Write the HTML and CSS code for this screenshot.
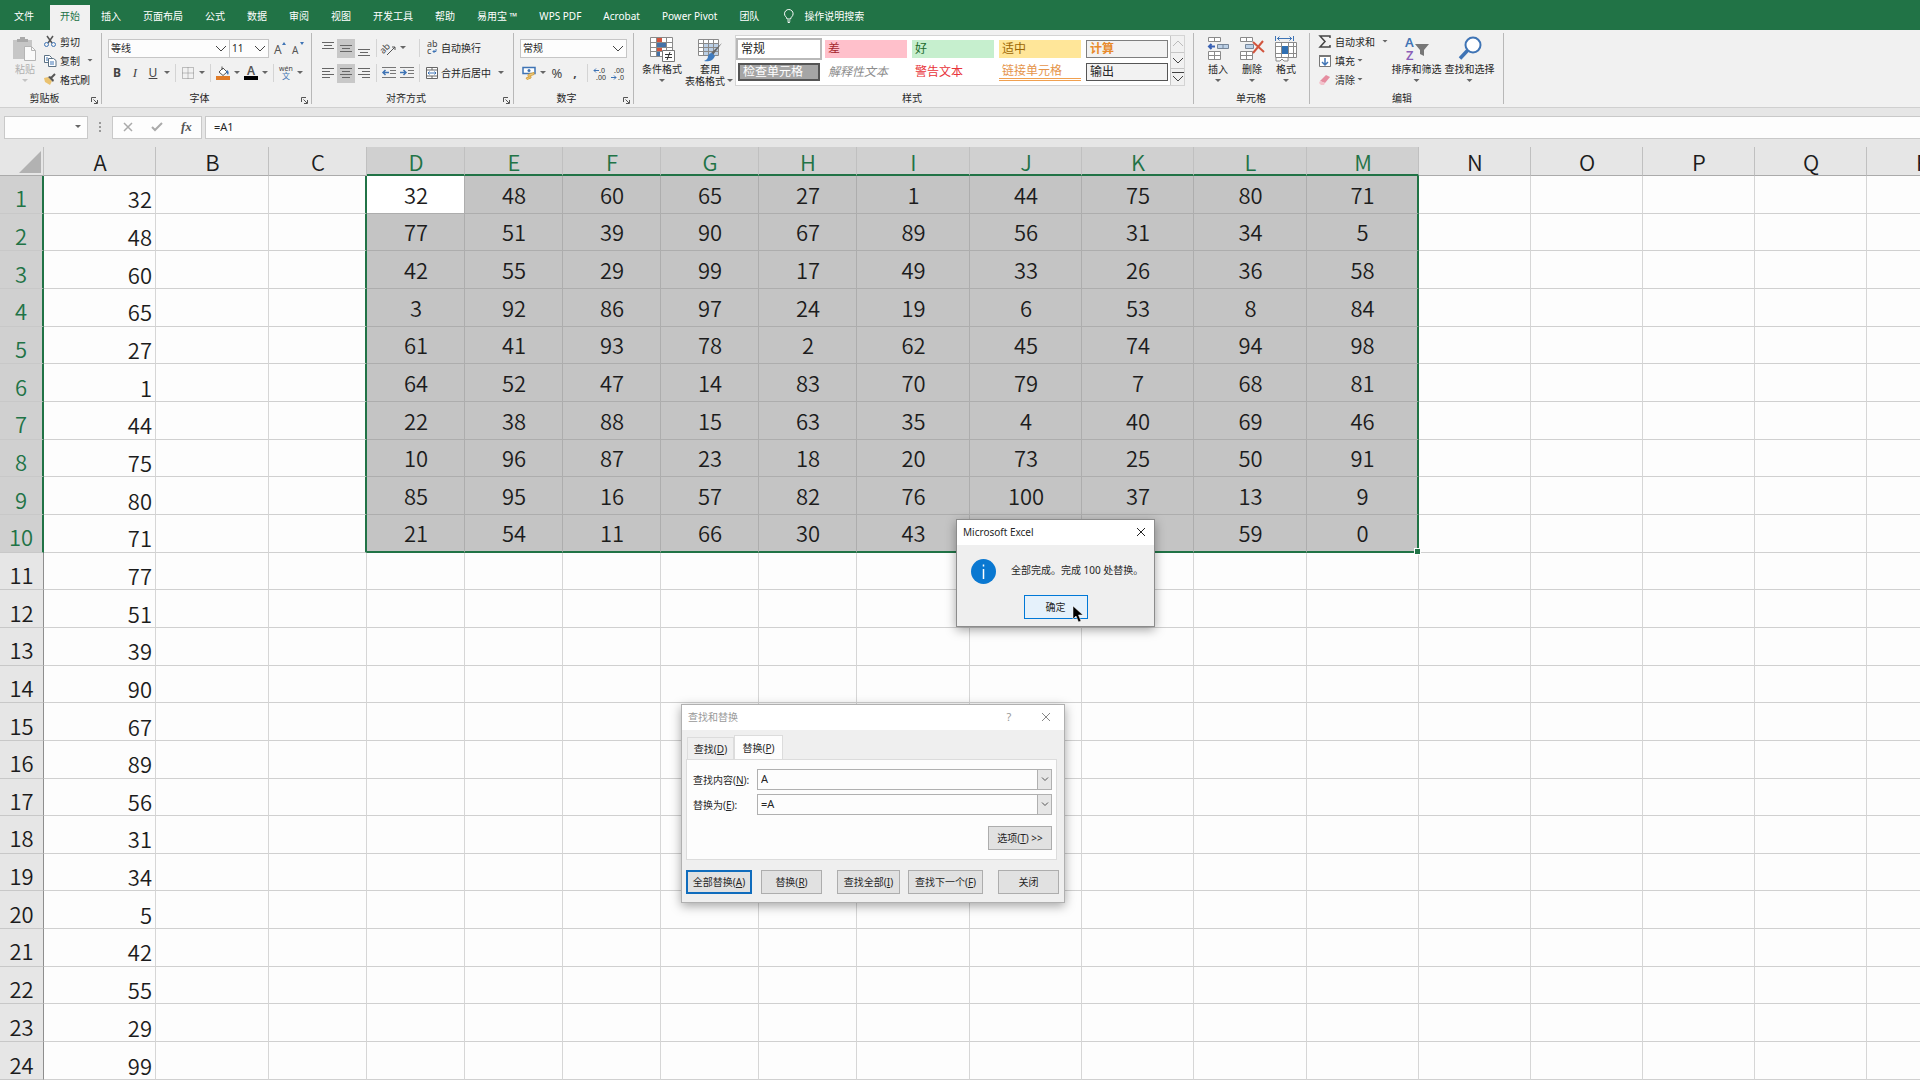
FILE: index.html
```html
<!DOCTYPE html>
<html lang="zh-CN">
<head>
<meta charset="UTF-8" />
<meta name="viewport" content="width=device-width, initial-scale=1" />
<title>Microsoft Excel</title>
<link rel="stylesheet" href="styles.css">
</head>
<body>

<nav class="tabs">
  <a class="tab tab-file" href="#file">文件</a>
  <a class="tab active" href="#home">开始</a>
  <a class="tab" href="#insert">插入</a>
  <a class="tab" href="#layout">页面布局</a>
  <a class="tab" href="#formulas">公式</a>
  <a class="tab" href="#data">数据</a>
  <a class="tab" href="#review">审阅</a>
  <a class="tab" href="#view">视图</a>
  <a class="tab" href="#developer">开发工具</a>
  <a class="tab" href="#help">帮助</a>
  <a class="tab" href="#yyb">易用宝 ™</a>
  <a class="tab" href="#wps">WPS PDF</a>
  <a class="tab" href="#acrobat">Acrobat</a>
  <a class="tab" href="#pivot">Power Pivot</a>
  <a class="tab" href="#team">团队</a>
  <a class="tab tell-me" href="#search">
    <svg width="12" height="14" viewBox="0 0 12 14" fill="none" stroke="#fff"><path d="M4 10C4 8 1.500 7.500 1.500 4.800a4.300 4.300 0 0 1 8.600 0C10.100 7.500 7.600 8 7.600 10zM4.200 12h3.200M4.800 13.500h2"/></svg>
    操作说明搜索
  </a>
</nav>

<section class="ribbon" aria-label="开始">
  <div class="group group-clipboard">
    <div class="group-body">
      <button class="big disabled">
        <svg width="26" height="26" viewBox="0 0 26 26"><path fill="#c6c6c6" d="M1 4h19v19H1z"/><path fill="#a9a9a9" d="M5 3h3V1h5v2h3v3H5z"/><path fill="#fafafa" stroke="#b5b5b5" d="M12.500 10.500h7l4 4v10h-11z"/><path fill="none" stroke="#b5b5b5" d="M19.500 10.500v4h4"/></svg>
        <span>粘贴</span>
        <i class="arrow"></i>
      </button>
      <div class="stack">
        <button class="small">
          <svg width="14" height="13" viewBox="0 0 14 13" fill="none"><path stroke="#555" stroke-width="1.500" d="M4 1l5 7M10 1L5 8"/><circle cx="3.500" cy="9.500" r="2" stroke="#3f74b5"/><circle cx="10.500" cy="9.500" r="2" stroke="#3f74b5"/></svg>
          <span>剪切</span>
        </button>
        <button class="small">
          <svg width="14" height="13" viewBox="0 0 14 13"><path fill="#fff" stroke="#5b7184" d="M1.500 1.500h5l2 2v5h-7z"/><path fill="#fff" stroke="#5b7184" d="M5.500 4.500h5l2.500 2v6h-7.500z"/><path stroke="#3f74b5" d="M3 4h2M3 6h2M7 8h4M7 10h4"/></svg>
          <span>复制</span><i class="arrow copy-arrow"></i>
        </button>
        <button class="small">
          <svg width="14" height="13" viewBox="0 0 14 13"><path fill="#eac270" d="M1 5l4-1 4 4-2 4-5-3z"/><path fill="#555" d="M5 4l2-1 4 4-1 2z"/><path stroke="#555" stroke-width="2" d="M8 5l4-4"/></svg>
          <span>格式刷</span>
        </button>
      </div>
    </div>
    <div class="group-label">剪贴板</div>
    <button class="launcher" aria-label="剪贴板设置"><svg width="7" height="7" viewBox="0 0 7 7" fill="none" stroke="#555"><path d="M.5 5V.5H5M2.500 2.500L6 6M6.500 3v3.500H3"/></svg></button>
  </div>

  <div class="group group-font">
    <div class="group-body rows">
      <div class="row">
        <select class="box font-name" aria-label="字体"><option>等线</option></select>
        <select class="box font-size" aria-label="字号"><option>11</option></select>
        <button class="tool grow" aria-label="增大字号"><svg width="14" height="14" viewBox="0 0 14 14"><text x="1" y="13" font-size="12" fill="#555">A</text><path fill="#3f74b5" d="M9 4l2-3 2 3z"/></svg></button>
        <button class="tool" aria-label="减小字号"><svg width="14" height="14" viewBox="0 0 14 14"><text x="1" y="13" font-size="10" fill="#555">A</text><path fill="#3f74b5" d="M9 1h4l-2 3z"/></svg></button>
      </div>
      <div class="row">
        <button class="tool bold">B</button>
        <button class="tool italic">I</button>
        <button class="tool under">U</button>
        <i class="arrow"></i>
        <span class="sep"></span>
        <button class="tool" aria-label="边框"><svg width="12" height="12" viewBox="0 0 12 12" fill="none" stroke="#888" stroke-dasharray="1 1"><path d="M.5.5h11v11H.5zM6 .5v11M.5 6h11"/></svg></button>
        <i class="arrow"></i>
        <span class="sep"></span>
        <button class="tool" aria-label="填充颜色"><svg width="14" height="14" viewBox="0 0 14 14"><path fill="#fff" stroke="#555" d="M3 6l4-4 4 4-4 3.500zM6 4V.5"/><path fill="#3f74b5" d="M11 4c2 1 2 3 1 5l-2-3z"/><path fill="#e07b28" d="M0 10h14v4H0z"/></svg></button>
        <i class="arrow"></i>
        <button class="tool" aria-label="字体颜色"><svg width="14" height="14" viewBox="0 0 14 14"><text x="3" y="9" font-size="12" font-weight="600" fill="#555">A</text><path d="M0 10h14v4H0z"/></svg></button>
        <i class="arrow"></i>
        <span class="sep"></span>
        <button class="tool" aria-label="拼音"><svg width="14" height="14" viewBox="0 0 14 14"><text x="0" y="5" font-size="7" fill="#444">wén</text><text x="3" y="13" font-size="8" fill="#3f74b5">文</text></svg></button>
        <i class="arrow"></i>
      </div>
    </div>
    <div class="group-label">字体</div>
    <button class="launcher" aria-label="字体设置"><svg width="7" height="7" viewBox="0 0 7 7" fill="none" stroke="#555"><path d="M.5 5V.5H5M2.500 2.500L6 6M6.500 3v3.500H3"/></svg></button>
  </div>

  <div class="group group-align">
    <div class="group-body rows">
      <div class="row">
        <button class="tool" aria-label="顶端对齐"><svg width="12" height="16" viewBox="0 0 12 16" stroke="#666"><path d="M0 2.500h12M2 5.500h8M0 8.500h12"/></svg></button>
        <button class="tool on" aria-label="垂直居中"><svg width="12" height="16" viewBox="0 0 12 16" stroke="#666"><path d="M0 5.500h12M2 8.500h8M0 11.500h12"/></svg></button>
        <button class="tool" aria-label="底端对齐"><svg width="12" height="16" viewBox="0 0 12 16" stroke="#666"><path d="M0 9.500h12M2 12.500h8M0 15.500h12"/></svg></button>
        <span class="sep"></span>
        <button class="tool" aria-label="方向"><svg width="14" height="14" viewBox="0 0 14 14"><text x="-1" y="10" font-size="9" fill="#444" transform="rotate(-45 4 9)">ab</text><path fill="none" stroke="#555" d="M5 14l8-8M13 9V6h-3"/></svg></button>
        <i class="arrow wide"></i>
        <span class="sep"></span>
        <button class="wrap-text"><svg width="12" height="14" viewBox="0 0 12 14"><text x="1" y="6" font-size="9" fill="#444">ab</text><text x="1" y="13" font-size="9" fill="#444">c</text><path fill="none" stroke="#3f74b5" d="M10 8v2.500H7M8.500 9L7 10.500 8.500 12"/></svg><span>自动换行</span></button>
      </div>
      <div class="row">
        <button class="tool" aria-label="左对齐"><svg width="12" height="10" viewBox="0 0 12 10" stroke="#666"><path d="M0 .5h12M0 3.500h8M0 6.500h12M0 9.500h8"/></svg></button>
        <button class="tool on" aria-label="居中"><svg width="12" height="10" viewBox="0 0 12 10" stroke="#666"><path d="M0 .5h12M2 3.500h8M0 6.500h12M2 9.500h8"/></svg></button>
        <button class="tool" aria-label="右对齐"><svg width="12" height="10" viewBox="0 0 12 10" stroke="#666"><path d="M0 .5h12M4 3.500h8M0 6.500h12M4 9.500h8"/></svg></button>
        <span class="sep"></span>
        <button class="tool" aria-label="减少缩进"><svg width="14" height="12" viewBox="0 0 14 12" fill="none" stroke="#777"><path d="M0 .5h14M8 3.500h6M8 6.500h6M0 10.500h14"/><path stroke="#3f74b5" stroke-width="1.500" d="M7 5.500H1M3.500 3L1 5.500 3.500 8"/></svg></button>
        <button class="tool" aria-label="增加缩进"><svg width="14" height="12" viewBox="0 0 14 12" fill="none" stroke="#777"><path d="M0 .5h14M8 3.500h6M8 6.500h6M0 10.500h14"/><path stroke="#3f74b5" stroke-width="1.500" d="M0 5.500h6M3.500 3L6 5.500 3.500 8"/></svg></button>
        <span class="sep"></span>
        <button class="wrap-text"><svg width="12" height="12" viewBox="0 0 12 12" fill="none" stroke="#666"><path fill="#fff" d="M.5.5h11v11H.5zM.5 3h11M.5 9h11M6 .5V3M6 9v2.500"/><path stroke="#3f74b5" d="M2 6h8M3.500 4.500L2 6l1.500 1.500M8.500 4.500L10 6 8.500 7.500"/></svg><span>合并后居中</span></button>
        <i class="arrow wide merge-arrow"></i>
      </div>
    </div>
    <div class="group-label">对齐方式</div>
    <button class="launcher" aria-label="对齐设置"><svg width="7" height="7" viewBox="0 0 7 7" fill="none" stroke="#555"><path d="M.5 5V.5H5M2.500 2.500L6 6M6.500 3v3.500H3"/></svg></button>
  </div>

  <div class="group group-number">
    <div class="group-body rows">
      <div class="row">
        <select class="box number-format" aria-label="数字格式"><option>常规</option></select>
      </div>
      <div class="row">
        <button class="tool" aria-label="会计格式"><svg width="14" height="14" viewBox="0 0 14 14"><path fill="#fff" stroke="#3f74b5" stroke-width="1.500" d="M1 1.500h12v6H1z"/><circle cx="7" cy="4.500" r="1.500" fill="#3f74b5"/><path fill="#f0d28a" stroke="#d9a441" d="M6 8.500l6-2v2l-6 2zM4 12l5-1.500V12l-4 1.500z"/></svg></button>
        <i class="arrow"></i>
        <button class="tool percent">%</button>
        <button class="tool comma">,</button>
        <span class="sep"></span>
        <button class="tool" aria-label="增加小数位数"><svg width="14" height="13" viewBox="0 0 14 13"><text x="6" y="6" font-size="7" fill="#333">.0</text><text x="3" y="13" font-size="7" fill="#333">.00</text><path fill="none" stroke="#3f74b5" d="M6 3.500H1M3 1.500l-2 2 2 2"/></svg></button>
        <button class="tool" aria-label="减少小数位数"><svg width="14" height="13" viewBox="0 0 14 13"><text x="3" y="6" font-size="7" fill="#333">.00</text><text x="7" y="13" font-size="7" fill="#333">.0</text><path fill="none" stroke="#3f74b5" d="M0 10.500h5M3 8.500l2 2-2 2"/></svg></button>
      </div>
    </div>
    <div class="group-label">数字</div>
    <button class="launcher" aria-label="数字设置"><svg width="7" height="7" viewBox="0 0 7 7" fill="none" stroke="#555"><path d="M.5 5V.5H5M2.500 2.500L6 6M6.500 3v3.500H3"/></svg></button>
  </div>

  <div class="group group-styles">
    <div class="group-body">
      <button class="big cond">
        <svg width="26" height="26" viewBox="0 0 26 26"><path fill="#fff" stroke="#8a8a8a" d="M1.500 1.500h22v19h-22zM1.500 6.500h22M1.500 11.500h22M1.500 15.500h22M7.500 1.500v19M17.500 1.500v19"/><path fill="#d2553e" d="M8 2h5v4H8zM8 12h5v3H8z"/><path fill="#4472a8" d="M8 7h9v4H8zM8 16h3v4H8z"/><path fill="#fff" stroke="#777" d="M13.500 14.500h12v11h-12z"/><path stroke="#333" d="M16 18.500h7M16 21.500h7M21 16l-3 8"/></svg>
        <span>条件格式</span>
        <i class="arrow"></i>
      </button>
      <button class="big table-format">
        <svg width="26" height="26" viewBox="0 0 26 26"><path fill="#fff" stroke="#8a8a8a" d="M1.500 3.500h20v16h-20z"/><path fill="#bcd0e6" d="M7 8h14v11H7z"/><path fill="none" stroke="#8a8a8a" d="M1.500 7.500h20M1.500 11.500h20M1.500 15.500h20M6.500 3.500v16M11.500 3.500v16M16.500 3.500v16"/><path fill="#666" d="M25 7l-9 12-2-2z"/><path fill="#3f7cc0" d="M15 17l3 3c-2 5-7 6-11 5 3-1 4-3 4-5 1-2 2-3 4-3z"/></svg>
        <span>套用</span>
        <span class="with-arrow">表格格式<i class="arrow"></i></span>
      </button>
      <div class="gallery">
        <div class="swatches">
          <button class="swatch normal">常规</button>
          <button class="swatch bad">差</button>
          <button class="swatch good">好</button>
          <button class="swatch neutral">适中</button>
          <button class="swatch calc">计算</button>
          <button class="swatch check">检查单元格</button>
          <button class="swatch note">解释性文本</button>
          <button class="swatch warn">警告文本</button>
          <button class="swatch linked">链接单元格</button>
          <button class="swatch output">输出</button>
        </div>
        <div class="scroller">
          <button aria-label="上一行"><svg width="12" height="7" viewBox="0 0 12 7" fill="none" stroke="#bbb"><path d="M1 6l5-5 5 5"/></svg></button>
          <button aria-label="下一行"><svg width="12" height="7" viewBox="0 0 12 7" fill="none" stroke="#444"><path d="M1 1l5 5 5-5"/></svg></button>
          <button aria-label="更多样式"><svg width="12" height="11" viewBox="0 0 12 11" fill="none" stroke="#444"><path d="M0 .5h12M1 4l5 5 5-5"/></svg></button>
        </div>
      </div>
    </div>
    <div class="group-label">样式</div>
  </div>

  <div class="group group-cells">
    <div class="group-body">
      <button class="big">
        <svg width="24" height="26" viewBox="0 0 24 26"><path fill="#fff" stroke="#8a8a8a" d="M2.500 1.500h12v4h-12zM8.500 1.500v4M2.500 15.500h12v8h-12zM8.500 15.500v8M2.500 19.500h12"/><path fill="#bcd0e6" stroke="#77879a" d="M11.500 8.500h11v4h-11zM17 8.500v4"/><path fill="none" stroke="#3a62b5" stroke-width="2" d="M9 10.500H3M5.500 8L3 10.500 5.500 13"/></svg>
        <span>插入</span>
        <i class="arrow"></i>
      </button>
      <button class="big">
        <svg width="26" height="26" viewBox="0 0 26 26"><path fill="#fff" stroke="#8a8a8a" d="M1.500 1.500h12v4h-12zM7.500 1.500v4M1.500 15.500h12v8h-12zM7.500 15.500v8M1.500 19.500h12"/><path fill="#bcd0e6" stroke="#77879a" d="M6.500 8.500h8v4h-8z"/><path stroke="#d2553e" stroke-width="2" d="M14 6l11 10M24 5L14 17"/></svg>
        <span>删除</span>
        <i class="arrow"></i>
      </button>
      <button class="big">
        <svg width="24" height="26" viewBox="0 0 24 26"><path fill="none" stroke="#3f74b5" d="M1.500 0v5M19.500 0v5M3 2.500h15M5.500.5l-2 2 2 2M15.500.5l2 2-2 2"/><path fill="#fff" stroke="#8a8a8a" d="M1.500 6.500h21v15h-21zM1.500 10.500h21M1.500 17.500h21M7.500 6.500v15M14.500 6.500v15M19.500 6.500v15M2 22v3h4l2-2 2 2h4v-3"/><path fill="#2f6fb2" d="M8 10h6v8H8z"/></svg>
        <span>格式</span>
        <i class="arrow"></i>
      </button>
    </div>
    <div class="group-label">单元格</div>
  </div>

  <div class="group group-edit">
    <div class="group-body">
      <div class="stack edit-stack">
        <button class="small">
          <svg width="14" height="13" viewBox="0 0 14 13" fill="none" stroke="#444" stroke-width="1.500"><path d="M12 3V1H2l5 5.500L2 12h10v-2"/></svg>
          <span>自动求和</span><i class="arrow far"></i>
        </button>
        <button class="small">
          <svg width="14" height="13" viewBox="0 0 14 13"><path fill="#fff" stroke="#777" d="M1.500 1.500h11v11h-11z"/><path fill="#777" d="M1 1h12v2H1z"/><path fill="none" stroke="#3f74b5" stroke-width="1.500" d="M7 4v7M4 8l3 3 3-3"/></svg>
          <span>填充</span><i class="arrow"></i>
        </button>
        <button class="small">
          <svg width="14" height="13" viewBox="0 0 14 13"><path fill="#e58da0" d="M2 8l6-6 4 2-5 6z"/><path fill="#f3c3cc" d="M2 8l5 2-1 2H3L1 10z"/></svg>
          <span>清除</span><i class="arrow"></i>
        </button>
      </div>
      <button class="big edit-big">
        <svg width="26" height="26" viewBox="0 0 26 26"><text x="1" y="11" font-size="13" font-weight="600" fill="#3f74b5">A</text><text x="2" y="24" font-size="13" font-weight="600" fill="#8b5fb8">Z</text><path fill="#777" d="M11 8h14l-5 6v6l-4-2v-4z"/></svg>
        <span>排序和筛选</span>
        <i class="arrow"></i>
      </button>
      <button class="big edit-big">
        <svg width="26" height="26" viewBox="0 0 26 26" fill="none" stroke="#3f74b5"><circle cx="16" cy="9" r="7.500" fill="#fff" stroke-width="2"/><path stroke-width="3.500" d="M10.500 14.500L3 22.500"/></svg>
        <span>查找和选择</span>
        <i class="arrow"></i>
      </button>
    </div>
    <div class="group-label">编辑</div>
  </div>
</section>

<div class="formula-bar">
  <div class="name-box">
    <input type="text" aria-label="名称框">
    <button aria-label="名称列表"><i class="arrow"></i></button>
  </div>
  <svg class="grip" width="4" height="12" viewBox="0 0 4 12" fill="#999"><path d="M1 1h2v2H1zM1 5h2v2H1zM1 9h2v2H1z"/></svg>
  <div class="formula-tools">
    <button aria-label="取消"><svg width="10" height="10" viewBox="0 0 10 10" fill="none" stroke="#aaa" stroke-width="1.500"><path d="M1 1l8 8M9 1L1 9"/></svg></button>
    <button aria-label="输入"><svg width="12" height="10" viewBox="0 0 12 10" fill="none" stroke="#aaa" stroke-width="2"><path d="M1 5l3 3 7-7"/></svg></button>
    <button class="fx">fx</button>
  </div>
  <input class="formula" type="text" value="=A1" aria-label="编辑栏">
</div>

<main class="sheet">
  <table class="grid" id="grid"></table>
</main>

<div class="dialog find-dialog" role="dialog" aria-label="查找和替换">
  <div class="dialog-title">
    <span>查找和替换</span>
    <button class="help" aria-label="帮助">?</button>
    <button aria-label="关闭窗口"><svg width="10" height="10" viewBox="0 0 10 10" stroke="#888"><path d="M1 1l8 8M9 1L1 9"/></svg></button>
  </div>
  <div class="dialog-tabs">
    <button>查找(<u>D</u>)</button>
    <button class="active">替换(<u>P</u>)</button>
  </div>
  <div class="panel">
    <div class="field">
      <label for="find-what">查找内容(<u>N</u>):</label>
      <div class="combo">
        <input id="find-what" type="text" value="A">
        <button aria-label="查找历史"><svg width="8" height="5" viewBox="0 0 8 5" fill="none" stroke="#555"><path d="M1 .5l3 3 3-3"/></svg></button>
      </div>
    </div>
    <div class="field">
      <label for="replace-with">替换为(<u>E</u>):</label>
      <div class="combo">
        <input id="replace-with" type="text" value="=A">
        <button aria-label="替换历史"><svg width="8" height="5" viewBox="0 0 8 5" fill="none" stroke="#555"><path d="M1 .5l3 3 3-3"/></svg></button>
      </div>
    </div>
    <button class="btn options">选项(<u>T</u>) &gt;&gt;</button>
  </div>
  <div class="dialog-buttons">
    <button class="btn primary">全部替换(<u>A</u>)</button>
    <button class="btn replace">替换(<u>R</u>)</button>
    <button class="btn find-all">查找全部(<u>I</u>)</button>
    <button class="btn find-next">查找下一个(<u>F</u>)</button>
    <button class="btn close">关闭</button>
  </div>
</div>

<div class="dialog message" role="alertdialog" aria-label="Microsoft Excel">
  <div class="dialog-title">
    <span>Microsoft Excel</span>
    <button aria-label="关闭消息"><svg width="10" height="10" viewBox="0 0 10 10" stroke="#222"><path d="M1 1l8 8M9 1L1 9"/></svg></button>
  </div>
  <div class="message-body">
    <svg width="25" height="25" viewBox="0 0 25 25"><circle cx="12.500" cy="12.500" r="12.500" fill="#0a78d1"/><path stroke="#fff" stroke-width="1.500" d="M12.500 10v10M12.500 5.500v2"/></svg>
    <p>全部完成。完成 100 处替换。</p>
  </div>
  <button class="btn ok">确定</button>
  <svg class="cursor" width="12" height="18" viewBox="0 0 12 18"><path stroke="#fff" stroke-width=".5" d="M1 1v13l3-3 2.500 6 2.500-1-2.500-6H11z"/></svg>
</div>

<script src="script.js"></script>
</body>
</html>
```
FILE: styles.css
```css
/* Reset and base */
* {
  box-sizing: border-box;
  margin: 0;
  padding: 0;
}
body {
  font-family: "Noto Sans", "Noto Sans CJK SC", sans-serif;
  font-size: 10px;
  line-height: 12px;
  color: #262626;
  background: #e6e6e6;
  height: 100vh;
  overflow: hidden;
  display: flex;
  flex-direction: column;
}
button,
input,
select {
  font: inherit;
  color: inherit;
  background: none;
  border: none;
  border-radius: 0;
  outline: none;
}
svg {
  display: block;
  flex: none;
  overflow: visible;
}

/* Tabs */
.tabs {
  flex: none;
  display: flex;
  align-items: flex-end;
  height: 30px;
  background: #217346;
}
.tab {
  display: flex;
  align-items: center;
  height: 25px;
  padding: 0 11px 4px;
  color: #fff;
  text-decoration: none;
  white-space: nowrap;
}
.tab-file {
  padding-left: 14px;
  padding-right: 16px;
}
.tab.active {
  padding: 0 10px 4px;
  background: #f1f1f1;
  color: #217346;
}
.tell-me {
  gap: 9px;
  margin-left: 2px;
}

/* Ribbon */
.ribbon {
  flex: none;
  display: flex;
  height: 78px;
  padding: 3px 0;
  background: #f1f1f1;
  border-bottom: 1px solid #d0d0d0;
}
.group {
  position: relative;
  display: flex;
  flex-direction: column;
  flex: none;
  border-right: 1px solid #b8b8b8;
}
.group-body {
  display: flex;
  height: 59px;
}
.group-label {
  padding-right: 20px;
  text-align: center;
  white-space: nowrap;
}
.launcher {
  position: absolute;
  right: 3px;
  bottom: 0;
}
.group-clipboard { width: 102px; padding-left: 8px; }
.group-font { width: 210px; padding-left: 6px; }
.group-align { width: 202px; padding-left: 7px; }
.group-number { width: 120px; padding-left: 6px; }
.group-styles { width: 560px; padding-left: 5px; }
.group-cells { width: 116px; padding-left: 7px; }
.group-edit { width: 194px; padding-left: 7px; }
.group-styles .group-label,
.group-cells .group-label { padding-right: 8px; }
.group-edit .group-label { padding-right: 16px; }

.arrow {
  flex: none;
  width: 10px;
  height: 4px;
  background: #666;
  clip-path: polygon(2px 0, 8px 0, 5px 3px);
}
.arrow.wide {
  width: 18px;
}

.big {
  display: flex;
  flex-direction: column;
  align-items: center;
  width: 34px;
  padding-top: 3px;
  white-space: nowrap;
}
.big span {
  margin-top: 1px;
}
.big svg + span + .arrow {
  margin-top: 4px;
}
.big .with-arrow {
  display: flex;
  align-items: center;
  margin-top: 0;
}
.disabled {
  color: #b0b0b0;
}
.disabled .arrow {
  background: #c4c4c4;
}
.cond { width: 46px; }
.table-format { width: 50px; }
.edit-big { width: 53px; }

.stack {
  display: flex;
  flex-direction: column;
}
.small {
  display: flex;
  align-items: center;
  gap: 3px;
  height: 19px;
  padding: 0 0 2px 1px;
  white-space: nowrap;
}
.small .copy-arrow {
  margin-left: 2px;
}
.edit-stack {
  width: 73px;
}
.edit-stack .small .arrow {
  margin-left: -3px;
}
.edit-stack .small .far {
  margin-left: 2px;
}

.rows {
  flex-direction: column;
  gap: 7px;
  padding-top: 6px;
}
.row {
  display: flex;
  align-items: center;
  height: 18px;
}
.sep {
  flex: none;
  width: 1px;
  height: 18px;
  margin: 0 3px;
  background: #d4d4d4;
}
.box {
  appearance: none;
  height: 19px;
  padding: 0 2px;
  border: 1px solid #c6c6c6;
  background: #fdfdfd url("data:image/svg+xml,%3Csvg xmlns='http://www.w3.org/2000/svg' width='12' height='7' fill='none' stroke='%23444'%3E%3Cpath d='M1 1l5 5 5-5'/%3E%3C/svg%3E") no-repeat right 2px center;
}
.font-name { width: 122px; }
.font-size { width: 40px; margin-left: -1px; }
.number-format { width: 107px; }

.tool {
  flex: none;
  display: flex;
  align-items: center;
  justify-content: center;
  width: 18px;
  height: 19px;
  font-size: 12px;
  color: #444;
}
.grow { margin-left: 2px; }
.on { background: #c8c8c8; }
.bold { font-weight: 700; }
.italic { font-style: italic; font-family: "Liberation Serif", serif; font-size: 13px; }
.under { text-decoration: underline; }
.percent { font-size: 13px; }
.comma { font-weight: 700; }
.wrap-text {
  display: flex;
  align-items: center;
  gap: 3px;
  padding-left: 3px;
  white-space: nowrap;
}
.merge-arrow { margin-left: 5px; }

/* Cell styles gallery */
.gallery {
  flex: none;
  display: flex;
  width: 450px;
  height: 51px;
  margin-top: 2px;
  border: 1px solid #d4d4d4;
}
.swatches {
  flex: 1;
  display: grid;
  grid-template-columns: repeat(5, 82px);
  grid-auto-rows: 18px;
  gap: 5px;
  padding: 4px 2px;
  background: #fff;
}
.swatch {
  padding: 0 3px;
  font-size: 12px;
  text-align: left;
  white-space: nowrap;
}
.normal { outline: 2px solid #b9b9b9; }
.bad { background: #ffc0cb; color: #a4262c; }
.good { background: #c6efce; color: #1c6b2c; }
.neutral { background: #ffe699; color: #9c6500; }
.calc { background: #f2f2f2; border: 1px solid #7f7f7f; color: #e88a2c; font-weight: 700; }
.check { background: #a5a5a5; border: 2px solid #555; color: #fff; }
.note { color: #8c8c8c; font-style: italic; }
.warn { color: #e8343a; }
.linked { border-bottom: 3px double #f0a050; color: #e5944a; }
.output { background: #f2f2f2; border: 1px solid #555; }
.scroller {
  display: flex;
  flex-direction: column;
  width: 14px;
  border-left: 1px solid #c6c6c6;
}
.scroller button {
  flex: 1;
  display: flex;
  align-items: center;
  justify-content: center;
}
.scroller button + button {
  border-top: 1px solid #c6c6c6;
}

/* Formula bar */
.formula-bar {
  flex: none;
  display: flex;
  align-items: center;
  height: 39px;
  padding: 0 0 1px 4px;
}
.name-box,
.formula-tools,
.formula {
  display: flex;
  height: 23px;
  background: #fdfdfd;
  border: 1px solid #c9c9c9;
}
.name-box { width: 84px; }
.name-box input { flex: 1; min-width: 0; }
.name-box button { width: 14px; }
.name-box .arrow { display: block; }
.grip { margin: 0 10px; }
.formula-tools {
  align-items: center;
  width: 90px;
}
.formula-tools button {
  flex: 1;
  display: flex;
  justify-content: center;
}
.formula-tools .fx {
  font: italic 700 13px "Liberation Serif", serif;
  color: #555;
}
.formula {
  flex: 1;
  margin-left: 3px;
  padding: 0 8px 1px;
  border-right: none;
  font-size: 11px;
}

/* Sheet */
.sheet {
  flex: 1;
  min-height: 0;
  overflow: hidden;
  background: #fdfdfd;
}
.grid {
  table-layout: fixed;
  width: 1979px;
  height: 100%;
  border-collapse: separate;
  border-spacing: 0;
  font-family: "Noto Sans CJK SC", sans-serif;
  font-size: 22px;
  font-weight: 350;
  line-height: 24px;
  color: #1c1c1c;
}
.col-head { width: 44px; }
.col-mid { width: 98px; }
.col-wide { width: 112px; }
.col-extra { width: 113px; }
.grid th {
  font-weight: 350;
  background: #e6e6e6;
  border-right: 1px solid #c0c0c0;
  border-bottom: 1px solid #c8c8c8;
}
.grid thead th {
  height: 29px;
  padding: 2px 0 0 1px;
  border-bottom-color: #ababab;
  vertical-align: top;
}
.grid tbody th {
  padding-top: 6px;
  border-right-color: #8e8e8e;
}
.grid thead th.picked {
  background: #d0d0d0;
  color: #217346;
  border-bottom: 2px solid #217346;
}
.grid tbody th.picked {
  background: #d0d0d0;
  color: #217346;
  border-right: 2px solid #217346;
}
.grid td {
  border-right: 1px solid #d6d6d6;
  border-bottom: 1px solid #d0d0d0;
  text-align: center;
}
.grid td.num {
  padding: 8px 3px 0 0;
  text-align: right;
}
.grid td.sel {
  position: relative;
  background: #c4c4c4;
  border-color: #adadad;
  padding: 0 0 1px 1px;
}
.grid td.current { background: #fff; }
.grid td.edge-left,
.grid td.edge-right { border-right: 2px solid #217346; }
.grid td.edge-bottom { border-bottom: 2px solid #217346; }
.corner svg {
  margin: 2px 2px 0 auto;
}
.handle {
  position: absolute;
  right: -3px;
  bottom: -3px;
  width: 5px;
  height: 5px;
  background: #217346;
  outline: 1px solid #fdfdfd;
}

/* Dialogs */
.dialog {
  position: absolute;
  display: flex;
  flex-direction: column;
  background: #efefef;
  border: 1px solid #8c8c8c;
  box-shadow: 0 3px 10px rgba(0, 0, 0, 0.35);
}
.dialog-title {
  display: flex;
  align-items: center;
  height: 25px;
  padding: 0 6px 2px;
  background: #fff;
}
.dialog-title span { flex: 1; }
.dialog-title button {
  display: flex;
  justify-content: center;
  width: 14px;
}
.btn {
  height: 24px;
  padding-bottom: 1px;
  background: #e1e1e1;
  border: 1px solid #adadad;
  text-align: center;
  white-space: nowrap;
}

.find-dialog {
  left: 681px;
  top: 704px;
  width: 384px;
  padding-bottom: 8px;
  border-color: #b0b0b0;
}
.find-dialog .dialog-title {
  color: #999;
}
.find-dialog .help {
  margin-right: 23px;
  font-size: 11px;
}
.find-dialog .dialog-title button:last-child {
  margin-right: 5px;
}
.dialog-tabs {
  display: flex;
  align-items: flex-end;
  padding: 5px 4px 0 5px;
}
.dialog-tabs button {
  width: 47px;
  height: 22px;
  border: 1px solid #dcdcdc;
  border-bottom: none;
}
.dialog-tabs .active {
  width: 49px;
  height: 24px;
  background: #fdfdfd;
}
.panel {
  display: flex;
  flex-direction: column;
  gap: 4px;
  height: 101px;
  margin: 0 7px 0 4px;
  padding: 9px 4px 0 6px;
  background: #fdfdfd;
  border: 1px solid #dcdcdc;
}
.field {
  display: flex;
  align-items: center;
}
.field label {
  width: 64px;
  white-space: nowrap;
}
.combo {
  flex: 1;
  display: flex;
  height: 21px;
  border: 1px solid #b0b0b0;
}
.combo input {
  flex: 1;
  min-width: 0;
  padding: 0 3px 2px;
  font-size: 11px;
}
.combo button {
  display: flex;
  align-items: center;
  justify-content: center;
  width: 14px;
  background: #e6e6e6;
  border-left: 1px solid #b0b0b0;
}
.options {
  align-self: flex-end;
  width: 64px;
  margin-top: 7px;
}
.dialog-buttons {
  display: flex;
  padding: 10px 5px 0 4px;
}
.primary {
  width: 66px;
  margin-right: 9px;
  border: 2px solid #0f6cbd;
}
.replace { width: 61px; margin-right: 15px; }
.find-all { width: 63px; margin-right: 8px; }
.find-next { width: 75px; margin-right: 15px; }
.close { flex: 1; }

.message {
  left: 956px;
  top: 519px;
  width: 199px;
  padding-bottom: 7px;
}
.message-body {
  display: flex;
  align-items: center;
  gap: 15px;
  padding: 14px 0 0 14px;
  white-space: nowrap;
}
.message-body p {
  padding-bottom: 3px;
}
.ok {
  align-self: center;
  width: 64px;
  margin-top: 11px;
  background: #e5f1fb;
  border-color: #0078d7;
}
.cursor {
  position: absolute;
  left: 115px;
  top: 85px;
}
```
FILE: script.js
```js
const columns = 'ABCDEFGHIJKLMNOPQR'.split('');
const widths = ['wide', 'extra', 'mid', 'mid', 'mid', 'mid', 'mid', 'mid', 'extra',
  'wide', 'wide', 'extra', 'wide', 'wide', 'wide', 'wide', 'wide', 'wide'];

const columnA = [32, 48, 60, 65, 27, 1, 44, 75, 80, 71, 77, 51,
  39, 90, 67, 89, 56, 31, 34, 5, 42, 55, 29, 99];

const block = [
  [32, 48, 60, 65, 27, 1, 44, 75, 80, 71],
  [77, 51, 39, 90, 67, 89, 56, 31, 34, 5],
  [42, 55, 29, 99, 17, 49, 33, 26, 36, 58],
  [3, 92, 86, 97, 24, 19, 6, 53, 8, 84],
  [61, 41, 93, 78, 2, 62, 45, 74, 94, 98],
  [64, 52, 47, 14, 83, 70, 79, 7, 68, 81],
  [22, 38, 88, 15, 63, 35, 4, 40, 69, 46],
  [10, 96, 87, 23, 18, 20, 73, 25, 50, 91],
  [85, 95, 16, 57, 82, 76, 100, 37, 13, 9],
  [21, 54, 11, 66, 30, 43, '', '', 59, 0]
];

// block covers D1:M10
const firstCol = 3;
const lastCol = 12;

let html = '<colgroup><col class="col-head">';
html += widths.map(w => `<col class="col-${w}">`).join('');
html += '</colgroup><thead><tr><th class="corner"><svg width="22" height="22" viewBox="0 0 22 22"><path fill="#b2b2b2" d="M22 0v22H0z"/></svg></th>';
columns.forEach((name, c) => {
  const picked = c >= firstCol && c <= lastCol;
  html += `<th scope="col"${picked ? ' class="picked"' : ''}>${name}</th>`;
});
html += '</tr></thead><tbody>';

columnA.forEach((value, r) => {
  const inRows = r < block.length;
  html += `<tr><th scope="row"${inRows ? ' class="picked"' : ''}>${r + 1}</th>`;
  columns.forEach((name, c) => {
    const cls = [];
    let text = '';
    if (c === 0) {
      cls.push('num');
      text = value;
    }
    if (inRows && c === firstCol - 1) cls.push('edge-left');
    if (inRows && c >= firstCol && c <= lastCol) {
      cls.push('sel');
      text = block[r][c - firstCol];
      if (r === 0 && c === firstCol) cls.push('current');
      if (c === lastCol) cls.push('edge-right');
      if (r === block.length - 1) cls.push('edge-bottom');
      if (c === lastCol && r === block.length - 1) text += '<i class="handle"></i>';
    }
    html += `<td${cls.length ? ` class="${cls.join(' ')}"` : ''}>${text}</td>`;
  });
  html += '</tr>';
});

document.getElementById('grid').innerHTML = html + '</tbody>';
```
